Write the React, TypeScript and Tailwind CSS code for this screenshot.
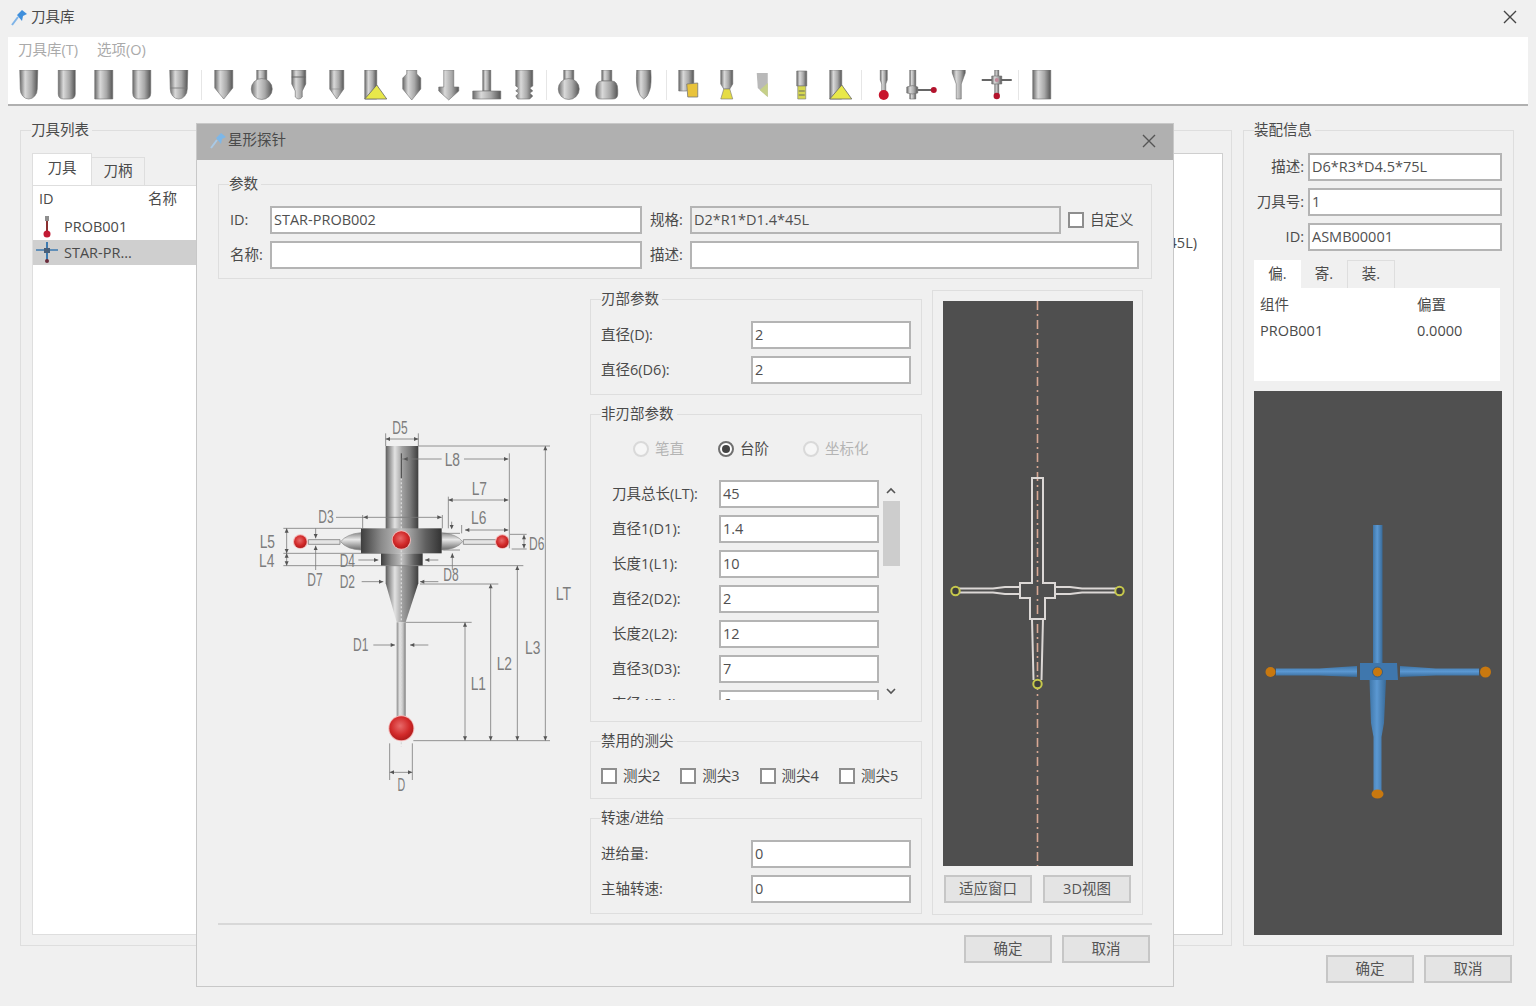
import React from "react";

const ink = "text-[#4a4a4a]";

function Pin({ light = false }: { light?: boolean }) {
  return (
    <svg width="18" height="18" viewBox="0 0 18 18" className="shrink-0">
      <path d="M1 17 L7 9" stroke={light ? "#a9c9e6" : "#7fb4e8"} strokeWidth="2" />
      <path d="M6 7 L11 2 L16 6 L12 8 L11 13 Z" fill={light ? "#7db7e8" : "#3f8fdc"} />
    </svg>
  );
}

function Metal() {
  return (
    <defs>
      <linearGradient id="metal" x1="0" x2="1" y1="0" y2="0">
        <stop offset="0" stopColor="#6a6a6a" />
        <stop offset="0.3" stopColor="#d9d9d9" />
        <stop offset="0.65" stopColor="#a8a8a8" />
        <stop offset="1" stopColor="#555555" />
      </linearGradient>
    </defs>
  );
}

const M = "url(#metal)";
const S = "#6e6e6e";

function ToolShape({ k }: { k: string }) {
  const body = (d: string) => <path d={d} fill={M} stroke={S} strokeWidth="0.6" />;
  switch (k) {
    case "ball":
      return body("M9 0H27L26.5 19A8.5 10 0 0 1 9.500 19Z");
    case "bull":
      return body("M9.500 0H26.500V24Q26.500 29 21 29H15Q9.500 29 9.500 24Z");
    case "flat":
      return body("M9 0H27V29H9Z");
    case "bull2":
      return body("M9 0H27V23Q27 29 21 29H15Q9 29 9 23Z");
    case "ballline":
      return (
        <>
          {body("M9 0H27L26.500 19A8.500 10 0 0 1 9.500 19Z")}
          <path d="M9.500 18H26.500" stroke="#777" strokeWidth="0.8" />
        </>
      );
    case "chamfer":
      return body("M9 0H27V18L18 29L9 18Z");
    case "bigball":
      return (
        <>
          {body("M13 0H23V12H13Z")}
          <circle cx="18" cy="19" r="10.500" fill={M} stroke={S} strokeWidth="0.6" />
        </>
      );
    case "form":
      return (
        <>
          {body("M11 0H25V14L21.500 21V27Q18 31 14.500 27V21L11 14Z")}
          <path d="M11 7H25" stroke="#666" strokeWidth="1" />
        </>
      );
    case "taper":
      return (
        <>
          {body("M11 0H25V19L18 29L11 19Z")}
          <path d="M11 19H25" stroke="#888" strokeWidth="0.6" />
        </>
      );
    case "tri":
      return (
        <>
          {body("M9 0H21V29H9Z")}
          <path d="M9 29H31L21 15Z" fill="#e8e84a" stroke="#666" strokeWidth="0.8" />
        </>
      );
    case "drill":
      return body("M13 0H23V4L27 8V19L18 30L9 19V8L13 4Z");
    case "csink":
      return body("M13 0H23V17H28V21L18 30L8 21V17H13Z");
    case "tslot":
      return (
        <>
          {body("M14 0H22V21H14Z")}
          {body("M4 21H32V29H4Z")}
        </>
      );
    case "thread":
      return body("M10 0H27V16L24 18L27 21L24 23L27 26L24 29H12L10 26L13 23L10 21L13 18L10 16Z");
    case "mush":
      return (
        <>
          {body("M13 0H23V11H13Z")}
          {body("M7 20Q7 11 13 11H23Q29 11 29 20V24Q29 29 24 29H12Q7 29 7 24Z")}
        </>
      );
    case "bullet":
      return body("M11 0H25Q26 14 24 20Q22 27 18 29Q14 27 12 20Q10 14 11 0Z");
    case "insert":
      return (
        <>
          {body("M8 0H23V13L16 21H8Z")}
          <path d="M16 14L27 13V27L17 27Z" fill="#e9c33b" stroke="#777" strokeWidth="0.8" />
        </>
      );
    case "hour":
      return (
        <>
          {body("M12 0H24V14L21 19H15L12 14Z")}
          <path d="M15 19H21L24 29H12Z" fill="#e5dc45" stroke="#777" strokeWidth="0.6" />
        </>
      );
    case "slant":
      return (
        <>
          <path d="M11 3H22V27L12 18Z" fill="#b9b9b9" />
          <path d="M22 13V27L14 20Z" fill="#c6d088" />
        </>
      );
    case "stripes":
      return (
        <>
          {body("M13 1H23V16H13Z")}
          <path d="M14 16H22V29H14Z" fill="#d6d84e" stroke="#777" strokeWidth="0.6" />
          <path d="M15 21H21M15 25H21" stroke="#666" />
        </>
      );
    case "redprobe":
      return (
        <>
          {body("M14.500 0H21.500V10L20 14V22H16V14L14.500 10Z")}
          <circle cx="18" cy="25" r="5" fill="#c8142c" />
        </>
      );
    case "lprobe":
      return (
        <>
          {body("M6 0H12V29H6Z")}
          {body("M3 17Q9 14 14 17V23Q9 25 3 23Z")}
          <path d="M14 20H29" stroke="#666" strokeWidth="2" />
          <circle cx="30" cy="20" r="3" fill="#b3132c" />
        </>
      );
    case "funnel":
      return body("M11.500 0H24.500V3L20.500 14V29H15.500V14L11.500 3Z");
    case "star":
      return (
        <>
          <path d="M3 10H33" stroke="#666" strokeWidth="2" />
          {body("M16 0H20V24H16Z")}
          {body("M13 6H23V14H13Z")}
          <circle cx="18" cy="26" r="3.200" fill="#b3132c" />
          <circle cx="18" cy="10" r="2" fill="#c08a9a" />
        </>
      );
    default:
      return null;
  }
}

const row1 = ["ball", "bull", "flat", "bull2", "ballline"];
const row2 = ["chamfer", "bigball", "form", "taper", "tri", "drill", "csink", "tslot", "thread"];
const row3 = ["bigball", "mush", "bullet"];
const row4 = ["insert", "hour", "slant", "stripes", "tri"];
const row5 = ["redprobe", "lprobe", "funnel", "star"];
const row6 = ["flat"];

function ToolGroup({ items, sep = true }: { items: string[]; sep?: boolean }) {
  return (
    <>
      {items.map((k, i) => (
        <svg key={i} viewBox="0 0 36 32" className="w-[37.5px] h-[32px] shrink-0">
          <Metal />
          <ToolShape k={k} />
        </svg>
      ))}
      {sep && (
        <div className="w-[7.5px] shrink-0 h-[30px] flex justify-center">
          <div className="w-px h-full bg-[#e6e6e6]" />
        </div>
      )}
    </>
  );
}

function Group({
  title,
  className = "",
  labelClass = "left-[10px]",
  children,
}: {
  title: string;
  className?: string;
  labelClass?: string;
  children?: React.ReactNode;
}) {
  return (
    <div className={`relative border border-[#dedede] ${className}`}>
      <span className={`absolute -top-[11px] ${labelClass} bg-[#f0f0f0] pr-[3px] leading-[20px] ${ink}`}>{title}</span>
      {children}
    </div>
  );
}

function Input({ value, className = "", disabled = false }: { value: string; className?: string; disabled?: boolean }) {
  return (
    <div
      className={`h-[28px] border-2 border-[#b4b4b4] px-[2px] leading-[23px] shrink-0 overflow-hidden whitespace-nowrap text-[#505050] ${
        disabled ? "bg-[#efefef]" : "bg-white"
      } ${className}`}
    >
      {value}
    </div>
  );
}

function Btn({ label, className = "" }: { label: string; className?: string }) {
  return (
    <div className={`w-[88px] h-[28px] flex items-center justify-center border-2 border-[#c6c6c6] bg-[#e4e4e4] text-[#555] shrink-0 ${className}`}>
      {label}
    </div>
  );
}

function Check({ label }: { label: string }) {
  return (
    <div className="flex items-center gap-[6px]">
      <div className="w-[16px] h-[16px] border-2 border-[#8e8e8e] bg-white" />
      <span>{label}</span>
    </div>
  );
}

function Radio({ label, on = false }: { label: string; on?: boolean }) {
  return (
    <div className={`w-[85px] shrink-0 flex items-center gap-[6px] ${on ? "text-[#4a4a4a]" : "text-[#b4b4b4]"}`}>
      <div className={`w-[16px] h-[16px] rounded-full border-2 flex items-center justify-center ${on ? "border-[#707070] bg-white" : "border-[#d9d9d9] bg-[#f6f6f6]"}`}>
        {on && <div className="w-[8px] h-[8px] rounded-full bg-[#444]" />}
      </div>
      <span>{label}</span>
    </div>
  );
}

function FieldRow({ label, value, w, input = "w-[160px]" }: { label: string; value: string; w: string; input?: string }) {
  return (
    <div className="flex items-center h-[28px] shrink-0">
      <span className={`${w} whitespace-nowrap pb-[1px]`}>{label}</span>
      <Input value={value} className={input} />
    </div>
  );
}

function Diagram() {
  const gray = "#7a7a7a";
  const L = (x1: number, y1: number, x2: number, y2: number, w = 2.4) => (
    <line x1={x1} y1={y1} x2={x2} y2={y2} stroke={gray} strokeWidth={w} />
  );
  const AR = (x: number, y: number, d: "u" | "d" | "l" | "r") => {
    const s = 13;
    const t = 6;
    const p =
      d === "u"
        ? `${x},${y} ${x - t},${y + s} ${x + t},${y + s}`
        : d === "d"
        ? `${x},${y} ${x - t},${y - s} ${x + t},${y - s}`
        : d === "l"
        ? `${x},${y} ${x + s},${y - t} ${x + s},${y + t}`
        : `${x},${y} ${x - s},${y - t} ${x - s},${y + t}`;
    return <polygon points={p} fill="#555" />;
  };
  const T = (s: string, x: number, y: number) => (
    <text
      x={x}
      y={y + 19}
      fill="#7d7d7d"
      fontSize="54"
      fontFamily="'Liberation Sans', sans-serif"
      textAnchor="middle"
      textLength={s.length * 23}
      lengthAdjust="spacingAndGlyphs"
    >
      {s}
    </text>
  );
  const ball = (cx: number, cy: number, r: number) => (
    <>
      <circle cx={cx} cy={cy} r={r + 3} fill="#f3b5b5" />
      <circle cx={cx} cy={cy} r={r} fill="url(#red)" />
    </>
  );
  return (
    <svg viewBox="0 0 1020 1200" className="w-[340px] h-[400px] block">
      <defs>
        <linearGradient id="shaft" x1="0" x2="1" y1="0" y2="0">
          <stop offset="0" stopColor="#5c5c5c" />
          <stop offset="0.28" stopColor="#e2e2e2" />
          <stop offset="0.5" stopColor="#a2a2a2" />
          <stop offset="0.75" stopColor="#7a7a7a" />
          <stop offset="1" stopColor="#3e3e3e" />
        </linearGradient>
        <linearGradient id="stylus" x1="0" x2="1" y1="0" y2="0">
          <stop offset="0" stopColor="#8a8a8a" />
          <stop offset="0.35" stopColor="#e6e6e6" />
          <stop offset="0.7" stopColor="#c4c4c4" />
          <stop offset="1" stopColor="#7a7a7a" />
        </linearGradient>
        <linearGradient id="hub" x1="0" x2="1" y1="0" y2="0">
          <stop offset="0" stopColor="#3e3e3e" />
          <stop offset="0.25" stopColor="#8a8a8a" />
          <stop offset="0.5" stopColor="#c0c0c0" />
          <stop offset="0.8" stopColor="#606060" />
          <stop offset="1" stopColor="#333333" />
        </linearGradient>
        <linearGradient id="nose" x1="0" x2="0" y1="0" y2="1">
          <stop offset="0" stopColor="#8a8a8a" />
          <stop offset="0.4" stopColor="#e8e8e8" />
          <stop offset="1" stopColor="#6a6a6a" />
        </linearGradient>
        <radialGradient id="red" cx="0.45" cy="0.4" r="0.65">
          <stop offset="0" stopColor="#e86a6a" />
          <stop offset="0.6" stopColor="#d22a2a" />
          <stop offset="1" stopColor="#a81818" />
        </radialGradient>
      </defs>

      <rect x="437" y="138" width="98" height="250" fill="url(#shaft)" />
      <path d="M205 419H300V433H205ZM670 419H770V433H670Z" fill="#e4e4e4" stroke="#808080" strokeWidth="2.500" />
      <path d="M363 398Q320 402 302 425Q320 448 363 450Z" fill="url(#nose)" stroke="#888" strokeWidth="2" />
      <path d="M605 398Q650 402 668 425Q650 448 605 450Z" fill="url(#nose)" stroke="#888" strokeWidth="2" />
      <rect x="363" y="385" width="242" height="75" fill="url(#hub)" />
      <rect x="423" y="460" width="125" height="37" fill="url(#hub)" />
      <path d="M437 497H535V550L497 667H470L437 550Z" fill="url(#shaft)" />
      <rect x="470" y="667" width="27" height="295" fill="url(#stylus)" />
      <line x1="484" y1="235" x2="484" y2="1040" stroke="#d8d8d8" strokeWidth="4" strokeDasharray="6 6" />
      <line x1="484" y1="160" x2="484" y2="235" stroke="#444" strokeWidth="3" />
      {ball(484, 985, 36)}
      {ball(484, 420, 26)}
      {ball(181, 425, 19)}
      {ball(787, 425, 19)}

      {L(437, 100, 437, 138)}
      {L(535, 100, 535, 138)}
      {L(437, 117, 535, 117)}
      {AR(437, 117, "l")}
      {AR(535, 117, "r")}
      {T("D5", 480, 82)}

      {L(535, 138, 930, 138)}
      {L(520, 1022, 930, 1022)}
      {L(916, 138, 916, 1022)}
      {AR(916, 138, "u")}
      {AR(916, 1022, "d")}
      {T("LT", 970, 580)}

      {L(484, 177, 605, 177)}
      {L(672, 177, 805, 177)}
      {AR(490, 177, "l")}
      {AR(805, 177, "r")}
      {L(808, 160, 808, 445)}
      {T("L8", 637, 180)}

      {L(625, 290, 625, 385)}
      {L(625, 300, 805, 300)}
      {AR(625, 300, "l")}
      {AR(805, 300, "r")}
      {T("L7", 718, 265)}

      {L(675, 390, 805, 390)}
      {AR(675, 390, "l")}
      {AR(805, 390, "r")}
      {L(635, 365, 635, 385)}
      {AR(635, 388, "d")}
      {L(665, 375, 665, 400)}
      {T("L6", 716, 352)}

      {L(288, 352, 605, 352)}
      {L(368, 345, 368, 385)}
      {L(607, 345, 607, 385)}
      {AR(370, 352, "l")}
      {AR(605, 352, "r")}
      {T("D3", 258, 350)}

      {L(130, 385, 363, 385)}
      {L(130, 460, 423, 460)}
      {L(130, 497, 850, 497)}
      {L(140, 385, 140, 497)}
      {AR(140, 385, "u")}
      {AR(140, 460, "d")}
      {AR(140, 460, "u")}
      {AR(140, 497, "d")}
      {T("L5", 82, 425)}
      {T("L4", 80, 483)}

      {L(227, 385, 227, 415)}
      {AR(227, 415, "d")}
      {L(227, 437, 227, 510)}
      {AR(227, 437, "u")}
      {T("D7", 225, 540)}

      {L(355, 480, 415, 480)}
      {AR(415, 480, "r")}
      {L(555, 480, 595, 480)}
      {AR(555, 480, "l")}
      {T("D4", 322, 482)}

      {L(637, 460, 637, 510)}
      {AR(637, 460, "u")}
      {L(610, 450, 660, 450)}
      {L(610, 400, 660, 400)}
      {T("D8", 633, 523)}

      {L(365, 545, 430, 545)}
      {AR(430, 545, "r")}
      {L(540, 545, 595, 545)}
      {AR(540, 545, "l")}
      {T("D2", 322, 545)}

      {L(852, 405, 852, 445)}
      {AR(852, 405, "u")}
      {AR(852, 445, "d")}
      {L(810, 403, 860, 403)}
      {L(815, 447, 860, 447)}
      {T("D6", 890, 430)}

      {L(832, 497, 832, 1022)}
      {AR(832, 497, "u")}
      {AR(832, 1022, "d")}
      {T("L3", 878, 742)}

      {L(540, 552, 775, 552)}
      {L(752, 552, 752, 1022)}
      {AR(752, 552, "u")}
      {AR(752, 1022, "d")}
      {T("L2", 793, 790)}

      {L(497, 667, 695, 667)}
      {L(675, 667, 675, 1022)}
      {AR(675, 667, "u")}
      {AR(675, 1022, "d")}
      {T("L1", 715, 850)}

      {L(400, 735, 465, 735)}
      {AR(465, 735, "r")}
      {L(510, 735, 565, 735)}
      {AR(510, 735, "l")}
      {T("D1", 362, 735)}

      {L(449, 1030, 449, 1140)}
      {L(517, 1030, 517, 1140)}
      {L(449, 1117, 517, 1117)}
      {AR(449, 1117, "l")}
      {AR(517, 1117, "r")}
      {T("D", 484, 1155)}
    </svg>
  );
}

function WirePreview() {
  return (
    <svg viewBox="0 0 190 565" className="w-[190px] h-[565px] block">
      <line x1="94.500" y1="0" x2="94.500" y2="565" stroke="#d8a894" strokeWidth="1.600" strokeDasharray="9 4 2 4" />
      <g fill="none" stroke="#dcd8d6" strokeWidth="2">
        <path d="M89 177H100V282H112V297H102V318H87V297H77V282H89Z" />
        <path d="M89 318L90.500 379M100 318L98.500 379" />
        <path d="M77 286H62L50 287.500H16M77 293H62L50 291.500H16" />
        <path d="M112 286H127L139 287.500H173M112 293H127L139 291.500H173" />
      </g>
      <g fill="#3d3d3d" stroke="#c6c84c" strokeWidth="2">
        <circle cx="12.500" cy="290" r="4.200" />
        <circle cx="176.500" cy="290" r="4.200" />
        <circle cx="94.500" cy="383" r="4.200" />
      </g>
    </svg>
  );
}

function SolidPreview() {
  return (
    <svg viewBox="0 0 248 544" className="w-[248px] h-[544px] block">
      <defs>
        <linearGradient id="blueV" x1="0" x2="1" y1="0" y2="0">
          <stop offset="0" stopColor="#3f76a8" />
          <stop offset="0.45" stopColor="#5b98d2" />
          <stop offset="1" stopColor="#386a98" />
        </linearGradient>
        <linearGradient id="blueH" x1="0" x2="0" y1="0" y2="1">
          <stop offset="0" stopColor="#3f76a8" />
          <stop offset="0.5" stopColor="#5b98d2" />
          <stop offset="1" stopColor="#386a98" />
        </linearGradient>
      </defs>
      <path d="M119 134H128.500V272H119Z" fill="url(#blueV)" />
      <path d="M115.500 289H132L130 332L127.500 346V403H119.500V346L117 332Z" fill="url(#blueV)" />
      <path d="M22 277.500H65L103 275V286L65 284.500H22Z" fill="url(#blueH)" />
      <path d="M225 277.500H182L146 275V286L182 284.500H225Z" fill="url(#blueH)" />
      <path d="M106 272H143L144 289H106Z" fill="#3f77ad" />
      <g fill="#c8780f">
        <circle cx="16.500" cy="281" r="5" />
        <circle cx="231.500" cy="281" r="5.500" />
        <circle cx="123.500" cy="281" r="5" stroke="#2c5f8f" strokeWidth="1" />
        <ellipse cx="123.500" cy="403" rx="6" ry="4.500" />
      </g>
    </svg>
  );
}

function MiniProbe({ star = false }: { star?: boolean }) {
  return star ? (
    <svg width="24" height="24" viewBox="0 0 24 24" className="shrink-0">
      <path d="M12 1V19" stroke="#3d7ab0" strokeWidth="2" />
      <path d="M1 9H23" stroke="#3d7ab0" strokeWidth="1.500" />
      <rect x="9" y="7" width="6" height="5" fill="#4a5f78" />
      <circle cx="12" cy="20" r="2" fill="#6a2a3a" />
    </svg>
  ) : (
    <svg width="24" height="24" viewBox="0 0 24 24" className="shrink-0">
      <path d="M12 1V17" stroke="#8a3030" strokeWidth="2" />
      <path d="M10 1H14V6H10Z" fill="#8f8f8f" />
      <circle cx="12" cy="19" r="3.500" fill="#c21a34" />
    </svg>
  );
}

export default function App() {
  return (
    <div className={`relative w-[1536px] h-[1006px] overflow-hidden bg-[#f0f0f0] flex flex-col text-[14.5px] ${ink} [font-family:'Open_Sans','Noto_Sans_CJK_SC',sans-serif]`}>
      <div className="h-[37px] shrink-0 flex items-center justify-between pl-[11px] pr-[18px] pb-[4px]">
        <div className="flex items-center gap-[2px]">
          <Pin />
          <span>刀具库</span>
        </div>
        <svg width="16" height="16" viewBox="0 0 16 16">
          <path d="M2 2L14 14M14 2L2 14" stroke="#444" strokeWidth="1.400" />
        </svg>
      </div>

      <div className="h-[25px] shrink-0 mx-[8px] bg-white flex items-center gap-[19px] pl-[10px] text-[#aaaaaa]">
        <span>刀具库(T)</span>
        <span>选项(O)</span>
      </div>

      <div className="h-[44px] shrink-0 mx-[8px] bg-white border-b-2 border-[#b0b0b0] flex items-start pt-[8px] pl-[2px]">
        <ToolGroup items={row1} />
        <ToolGroup items={row2} />
        <ToolGroup items={row3} />
        <ToolGroup items={row4} />
        <ToolGroup items={row5} />
        <ToolGroup items={row6} sep={false} />
      </div>

      <div className="flex gap-[11px] pl-[20px] mt-[24px] h-[816px] shrink-0">
        <Group title="刀具列表" className="w-[1212px] flex gap-[5px] pt-[22px] pl-[11px] pr-[8px] pb-[10px]">
          <div className="w-[178px] flex flex-col shrink-0">
            <div className="flex items-end h-[32px] shrink-0">
              <div className="w-[60px] h-[32px] bg-white flex items-center justify-center pb-[3px] border-t border-x border-[#dedede]">刀具</div>
              <div className="w-[53px] h-[28px] flex items-center justify-center pb-[2px] border-t border-r border-[#dedede]">刀柄</div>
            </div>
            <div className="flex-1 bg-white border border-[#dedede]">
              <div className="h-[28px] flex items-center pl-[6px] pb-[3px]">
                <span className="w-[109px]">ID</span>
                <span>名称</span>
              </div>
              <div className="h-[26px] flex items-center gap-[5px] pl-[2px]">
                <MiniProbe />
                <span>PROB001</span>
              </div>
              <div className="h-[25px] flex items-center gap-[5px] pl-[2px] bg-[#cfcfcf]">
                <MiniProbe star />
                <span>STAR-PR...</span>
              </div>
            </div>
          </div>
          <div className="flex-1 bg-white border border-[#cfcfcf] flex flex-col items-end pt-[78px] pr-[25px]">
            <span>45L)</span>
          </div>
        </Group>

        <Group title="装配信息" className="w-[271px] pt-[22px] pl-[10px] pr-[11px]">
          <div className="flex flex-col gap-[7px]">
            {[
              ["描述:", "D6*R3*D4.5*75L"],
              ["刀具号:", "1"],
              ["ID:", "ASMB00001"],
            ].map(([a, b]) => (
              <div key={a} className="flex items-center gap-[4px]">
                <span className="w-[50px] text-right whitespace-nowrap pb-[1px]">{a}</span>
                <Input value={b} className="w-[194px]" />
              </div>
            ))}
          </div>
          <div className="flex mt-[9px] h-[28px]">
            <div className="w-[47px] bg-white flex items-center justify-center pb-[1px]">偏.</div>
            <div className="w-[47px] flex items-center justify-center pb-[1px] border-r border-[#dedede]">寄.</div>
            <div className="w-[47px] flex items-center justify-center pb-[1px] border-r border-t border-[#dedede]">装.</div>
          </div>
          <div className="w-[246px] h-[93px] bg-white pt-[4px] pl-[6px] leading-[26px]">
            <div className="flex">
              <span className="w-[157px]">组件</span>
              <span>偏置</span>
            </div>
            <div className="flex">
              <span className="w-[157px]">PROB001</span>
              <span>0.0000</span>
            </div>
          </div>
          <div className="mt-[10px] w-[248px] h-[544px] bg-[#505050]">
            <SolidPreview />
          </div>
        </Group>
      </div>

      <div className="flex justify-end gap-[10px] pr-[24px] mt-[9px]">
        <Btn label="确定" />
        <Btn label="取消" />
      </div>

      <div className="absolute left-[196px] top-[123px] w-[978px] h-[864px] border border-[#c8c8c8] bg-[#f0f0f0] flex flex-col">
        <div className="h-[36px] shrink-0 bg-[#b0b0b0] flex items-center justify-between pl-[13px] pr-[16px]">
          <div className="flex items-center pb-[4px]">
            <Pin light />
            <span>星形探针</span>
          </div>
          <svg width="16" height="16" viewBox="0 0 16 16" className="mb-[3px]">
            <path d="M2 2L14 14M14 2L2 14" stroke="#555" strokeWidth="1.400" />
          </svg>
        </div>

        <div className="flex-1 flex flex-col pl-[21px] pt-[24px]">
          <Group title="参数" className="w-[934px] h-[95px] shrink-0 pt-[21px] pl-[11px] flex flex-col gap-[7px]">
            <div className="flex items-center">
              <span className="w-[40px] pb-[1px]">ID:</span>
              <Input value="STAR-PROB002" className="w-[372px]" />
              <span className="w-[40px] ml-[8px] pb-[1px] whitespace-nowrap">规格:</span>
              <Input value="D2*R1*D1.4*45L" className="w-[371px]" disabled />
              <div className="ml-[7px]">
                <Check label="自定义" />
              </div>
            </div>
            <div className="flex items-center">
              <span className="w-[40px] pb-[1px]">名称:</span>
              <Input value="" className="w-[372px]" />
              <span className="w-[40px] ml-[8px] pb-[1px] whitespace-nowrap">描述:</span>
              <Input value="" className="w-[449px]" />
            </div>
          </Group>

          <div className="flex mt-[11px] h-[625px] shrink-0">
            <div className="w-[372px] shrink-0 pl-[22px] pt-[110px]">
              <Diagram />
            </div>

            <div className="w-[332px] shrink-0 pt-[9px] flex flex-col gap-[19px]">
              <Group title="刃部参数" className="h-[96px] shrink-0 pt-[21px] pl-[10px] flex flex-col gap-[7px]">
                <FieldRow label="直径(D):" value="2" w="w-[150px]" />
                <FieldRow label="直径6(D6):" value="2" w="w-[150px]" />
              </Group>

              <Group title="非刃部参数" className="h-[308px] shrink-0 pl-[21px] flex flex-col">
                <div className="flex items-center h-[28px] mt-[20px] pl-[21px] shrink-0">
                  <Radio label="笔直" />
                  <Radio label="台阶" on />
                  <Radio label="坐标化" />
                </div>
                <div className="flex mt-[17px]">
                  <div className="w-[268px] h-[220px] overflow-hidden flex flex-col gap-[7px] shrink-0">
                    <FieldRow label="刀具总长(LT):" value="45" w="w-[107px]" />
                    <FieldRow label="直径1(D1):" value="1.4" w="w-[107px]" />
                    <FieldRow label="长度1(L1):" value="10" w="w-[107px]" />
                    <FieldRow label="直径2(D2):" value="2" w="w-[107px]" />
                    <FieldRow label="长度2(L2):" value="12" w="w-[107px]" />
                    <FieldRow label="直径3(D3):" value="7" w="w-[107px]" />
                    <FieldRow label="直径4(D4):" value="6" w="w-[107px]" />
                  </div>
                  <div className="w-[18px] ml-[2px] h-[220px] flex flex-col items-center">
                    <svg width="12" height="12" viewBox="0 0 12 12" className="mt-[5px] shrink-0">
                      <path d="M2 8L6 4L10 8" fill="none" stroke="#555" strokeWidth="1.600" />
                    </svg>
                    <div className="w-[17px] h-[65px] bg-[#cdcdcd] mt-[4px]" />
                    <svg width="12" height="12" viewBox="0 0 12 12" className="mt-auto mb-[3px] shrink-0">
                      <path d="M2 4L6 8L10 4" fill="none" stroke="#555" strokeWidth="1.600" />
                    </svg>
                  </div>
                </div>
              </Group>

              <Group title="禁用的测尖" className="h-[58px] shrink-0 pl-[10px] flex items-center gap-[20px] pt-[12px]">
                <Check label="测尖2" />
                <Check label="测尖3" />
                <Check label="测尖4" />
                <Check label="测尖5" />
              </Group>

              <Group title="转速/进给" className="h-[96px] shrink-0 pt-[21px] pl-[10px] flex flex-col gap-[7px]">
                <FieldRow label="进给量:" value="0" w="w-[150px]" />
                <FieldRow label="主轴转速:" value="0" w="w-[150px]" />
              </Group>
            </div>

            <div className="ml-[10px] w-[211px] shrink-0 border border-[#dedede] pt-[10px] pl-[10px]">
              <div className="w-[190px] h-[565px] bg-[#4f4f4f]">
                <WirePreview />
              </div>
              <div className="flex gap-[11px] mt-[9px] pl-[1px]">
                <Btn label="适应窗口" />
                <Btn label="3D视图" />
              </div>
            </div>
          </div>

          <div className="w-[934px] border-t-2 border-[#d8d8d8] mt-[8px]" />
          <div className="w-[932px] flex justify-end gap-[10px] mt-[10px]">
            <Btn label="确定" />
            <Btn label="取消" />
          </div>
        </div>
      </div>
    </div>
  );
}
